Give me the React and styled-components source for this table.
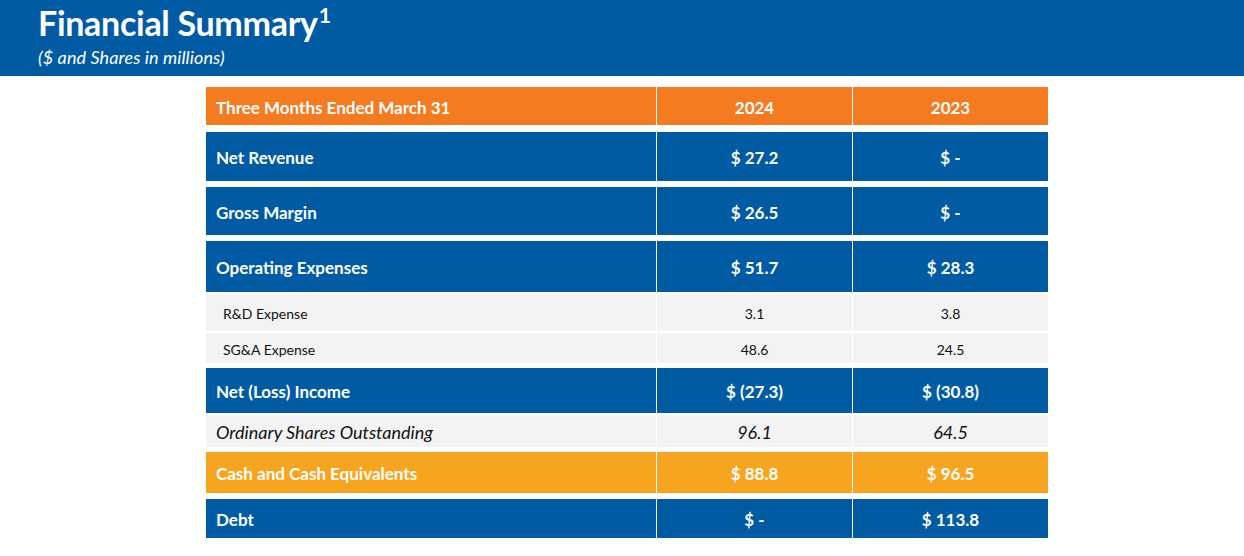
import React from "react"
import styled, { createGlobalStyle } from "styled-components"

const GlobalStyle = createGlobalStyle`
  body {
    margin: 0;
    background: #ffffff;
    font-family: Lato, "Liberation Sans", sans-serif;
  }
`

const palette = {
  blue: "#005BA3",
  orange: "#F47B20",
  gold: "#F7A520",
  grey: "#F3F3F3",
}

const Page = styled.div`
  width: 1244px;
  height: 556px;
  overflow: hidden;
`

const Banner = styled.header`
  background-color: ${palette.blue};
  height: 76px;
  padding: 3px 0 0 38px;
  box-sizing: border-box;
  color: white;
`

const Title = styled.h1`
  margin: 0;
  font-size: 34px;
  font-weight: 700;
  line-height: 40px;
  letter-spacing: -0.3px;
`

const Sup = styled.sup`
  font-size: 21px;
  vertical-align: 13px;
  line-height: 0;
  margin-left: 1px;
`

const Subtitle = styled.p`
  margin: 0;
  font-size: 18px;
  font-style: italic;
  line-height: 28px;
  letter-spacing: 0.1px;
`

const Table = styled.div`
  width: 842px;
  margin: 11px 0 0 206px;
  display: flex;
  flex-direction: column;
`

const Row = styled.div`
  display: grid;
  grid-template-columns: 450px 195px 195px;
  column-gap: 1px;
  height: ${(p) => p.h}px;
  margin-top: ${(p) => p.space}px;
`

const Cell = styled.div`
  background-color: ${(p) => palette[p.tone]};
  color: ${(p) => (p.tone === "grey" ? "#111" : "#fff")};
  font-weight: ${(p) => (p.tone === "grey" ? 400 : 700)};
  font-style: ${(p) => (p.italic ? "italic" : "normal")};
  font-size: ${(p) => (p.small ? 14 : p.italic ? 18 : 17)}px;
  display: flex;
  align-items: center;
  justify-content: ${(p) => (p.label ? "flex-start" : "center")};
  padding: 2px 0 0 ${(p) => (p.label ? (p.small ? 17 : 10) : 0)}px;
`

const rows = [
  { label: "Three Months Ended March 31", a: "2024", b: "2023", tone: "orange", h: 38, space: 0 },
  { label: "Net Revenue", a: "$ 27.2", b: "$ -", tone: "blue", h: 49, space: 7 },
  { label: "Gross Margin", a: "$ 26.5", b: "$ -", tone: "blue", h: 48, space: 6 },
  { label: "Operating Expenses", a: "$ 51.7", b: "$ 28.3", tone: "blue", h: 51, space: 6 },
  { label: "R&D Expense", a: "3.1", b: "3.8", tone: "grey", h: 37, space: 2, small: true },
  { label: "SG&A Expense", a: "48.6", b: "24.5", tone: "grey", h: 30, space: 2, small: true },
  { label: "Net (Loss) Income", a: "$ (27.3)", b: "$ (30.8)", tone: "blue", h: 45, space: 5 },
  { label: "Ordinary Shares Outstanding", a: "96.1", b: "64.5", tone: "grey", h: 32, space: 2, italic: true },
  { label: "Cash and Cash Equivalents", a: "$ 88.8", b: "$ 96.5", tone: "gold", h: 41, space: 5 },
  { label: "Debt", a: "$ -", b: "$ 113.8", tone: "blue", h: 39, space: 6 },
]

const App = () => {
  return (
    <Page>
      <GlobalStyle />
      <Banner>
        <Title>
          Financial Summary<Sup>1</Sup>
        </Title>
        <Subtitle>($ and Shares in millions)</Subtitle>
      </Banner>
      <Table>
        {rows.map((r) => (
          <Row key={r.label} h={r.h} space={r.space}>
            <Cell label tone={r.tone} small={r.small} italic={r.italic}>
              {r.label}
            </Cell>
            <Cell tone={r.tone} small={r.small} italic={r.italic}>
              {r.a}
            </Cell>
            <Cell tone={r.tone} small={r.small} italic={r.italic}>
              {r.b}
            </Cell>
          </Row>
        ))}
      </Table>
    </Page>
  )
}

export default App
